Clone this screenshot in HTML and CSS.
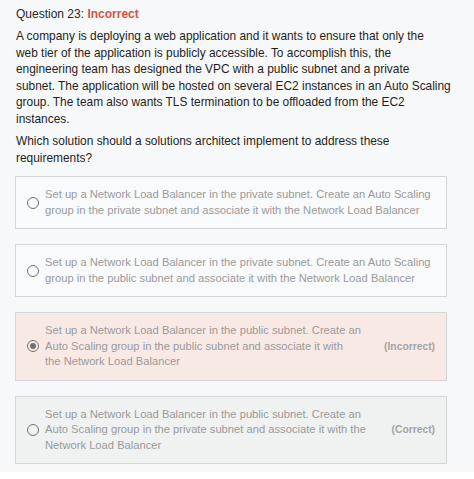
FILE: index.html
```html
<!DOCTYPE html>
<html>
<head>
<meta charset="utf-8">
<link rel="stylesheet" href="styles.css">
</head>
<body>
<div class="page">
  <div class="title">Question 23: <span class="status">Incorrect</span></div>
  <p class="question q1">A company is deploying a web application and it wants to ensure that only the<br>web tier of the application is publicly accessible. To accomplish this, the<br>engineering team has designed the VPC with a public subnet and a private<br>subnet. The application will be hosted on several EC2 instances in an Auto Scaling<br>group. The team also wants TLS termination to be offloaded from the EC2<br>instances.</p>
  <p class="question q2">Which solution should a solutions architect implement to address these<br>requirements?</p>
  <div class="options">
    <div class="option">
      <span class="radio"></span>
      <span class="text">Set up a Network Load Balancer in the private subnet. Create an Auto Scaling<br>group in the private subnet and associate it with the Network Load Balancer</span>
    </div>
    <div class="option">
      <span class="radio"></span>
      <span class="text">Set up a Network Load Balancer in the private subnet. Create an Auto Scaling<br>group in the public subnet and associate it with the Network Load Balancer</span>
    </div>
    <div class="option wrong">
      <span class="radio checked"></span>
      <span class="text">Set up a Network Load Balancer in the public subnet. Create an<br>Auto Scaling group in the public subnet and associate it with<br>the Network Load Balancer</span>
      <span class="tag">(Incorrect)</span>
    </div>
    <div class="option right">
      <span class="radio"></span>
      <span class="text">Set up a Network Load Balancer in the public subnet. Create an<br>Auto Scaling group in the private subnet and associate it with the<br>Network Load Balancer</span>
      <span class="tag">(Correct)</span>
    </div>
  </div>
</div>
</body>
</html>
```
FILE: styles.css
```css
html, body {
  margin: 0;
  padding: 0;
  background: #ffffff;
}
body {
  font-family: "Liberation Sans", Arial, sans-serif;
  color: #1f1f21;
}
.page {
  background: #f7f8fa;
  padding: 6px 26px 8px 16px;
  width: 432px;
}
.title {
  font-size: 12px;
  line-height: 17px;
  margin-bottom: 5px;
  color: #262628;
}
.status {
  color: #d2543f;
  font-weight: 700;
}
.question {
  font-size: 11.9px;
  line-height: 16.5px;
  margin: 0;
  white-space: nowrap;
}
.q1 {
  margin-bottom: 6px;
}
.options {
  margin-top: 10px;
  margin-left: -1px;
  margin-right: 1px;
  display: flex;
  flex-direction: column;
  gap: 15px;
}
.option {
  display: flex;
  align-items: center;
  gap: 20px;
  border: 1px solid #d5d5d5;
  background: #f9fafb;
  padding: 10px 11px;
}
.option.wrong {
  background: #f9e9e5;
}
.option.right {
  background: #eff2f1;
}
.radio {
  flex: none;
  box-sizing: border-box;
  width: 12px;
  height: 12px;
  border: 1.5px solid #707070;
  border-radius: 50%;
  margin-right: -14px;
  position: relative;
}
.radio.checked::after {
  content: "";
  position: absolute;
  left: 1.5px;
  top: 1.5px;
  width: 6px;
  height: 6px;
  border-radius: 50%;
  background: #707070;
}
.text {
  flex: 1;
  font-size: 11.2px;
  line-height: 15.5px;
  color: #9a9a9a;
  white-space: nowrap;
}
.tag {
  flex: none;
  font-size: 10.3px;
  font-weight: 700;
  color: #a3a3a3;
}
```
